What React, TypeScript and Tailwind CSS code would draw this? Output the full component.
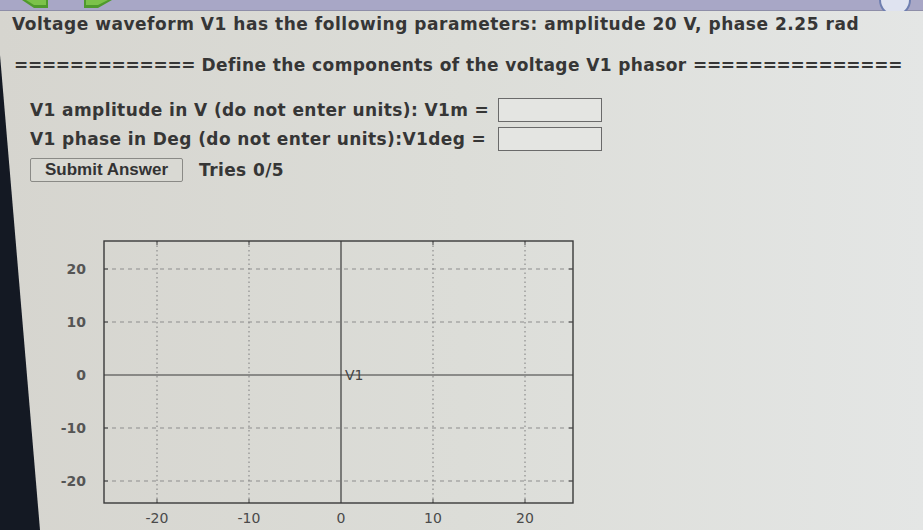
import React from "react";

const font = { fontFamily: '"DejaVu Sans", Verdana, sans-serif' };

function Chart() {
  const L = 64, R = 533, T = 9, B = 271;
  const x0 = 301, sx = 9.2, y0 = 143, sy = 5.3;
  const xs = [-20, -10, 10, 20];
  const ys = [20, 10, -10, -20];
  return (
    <svg width="560" height="300" viewBox="0 0 560 300" style={font}>
      {ys.map((v) => (
        <line key={"h" + v} x1={L} x2={R} y1={y0 - v * sy} y2={y0 - v * sy} stroke="#8d8d8d" strokeWidth="1" strokeDasharray="4 4" />
      ))}
      {xs.map((v) => (
        <line key={"v" + v} x1={x0 + v * sx} x2={x0 + v * sx} y1={T} y2={B} stroke="#8d8d8d" strokeWidth="1.2" strokeDasharray="1.5 3" />
      ))}
      {ys.map((v) => (
        <g key={"ty" + v}>
          <line x1={L} x2={L + 4} y1={y0 - v * sy} y2={y0 - v * sy} stroke="#444" />
          <line x1={R - 4} x2={R} y1={y0 - v * sy} y2={y0 - v * sy} stroke="#444" />
        </g>
      ))}
      {xs.map((v) => (
        <g key={"tx" + v}>
          <line x1={x0 + v * sx} x2={x0 + v * sx} y1={T} y2={T + 4} stroke="#444" />
          <line x1={x0 + v * sx} x2={x0 + v * sx} y1={B - 4} y2={B} stroke="#444" />
        </g>
      ))}
      <line x1={L} x2={R} y1={y0} y2={y0} stroke="#3a3a3a" strokeWidth="1.2" />
      <line x1={x0} x2={x0} y1={T} y2={B} stroke="#3a3a3a" strokeWidth="1.2" />
      <rect x={L} y={T} width={R - L} height={B - T} fill="none" stroke="#3a3a3a" strokeWidth="1.4" />
      <text x={x0 + 4} y={y0 + 5} fontSize="14" fill="#444">V1</text>
      {[20, 10, 0, -10, -20].map((v) => (
        <text key={"ly" + v} x={L - 18} y={y0 - v * sy + 5} fontSize="14" fontWeight="bold" fill="#555" textAnchor="end">{v}</text>
      ))}
      {[-20, -10, 0, 10, 20].map((v) => (
        <text key={"lx" + v} x={x0 + v * sx} y={291} fontSize="14" fill="#4a4a4a" textAnchor="middle">{v}</text>
      ))}
    </svg>
  );
}

export default function App() {
  return (
    <div className="relative w-[923px] h-[530px] overflow-hidden bg-linear-to-r from-[#d6d5cf] via-[#dcddd8] to-[#e4e6e5] text-[#363636]" style={font}>
      <div className="relative h-[11px] bg-[#a8a7c6] border-b border-[#8e8ea8]">
        <svg className="absolute left-[14px] top-0" width="110" height="11" viewBox="0 0 110 11">
          <path d="M8 0 L20 8 L34 8 L34 0 Z" fill="#4f9a2c" />
          <path d="M70 0 L70 8 L84 8 L98 0 Z" fill="#4f9a2c" />
          <path d="M12 0 L20 5 L32 5 L32 0 Z" fill="#7cc24a" />
          <path d="M72 0 L72 5 L84 5 L94 0 Z" fill="#7cc24a" />
        </svg>
        <svg className="absolute left-[878px] top-0" width="34" height="11" viewBox="0 0 34 11">
          <path d="M2 0 A15 15 0 0 0 32 0" fill="#dfe3f0" stroke="#6f7fb0" strokeWidth="2" />
        </svg>
      </div>

      <div className="pl-[12px] pt-[3px] font-bold tracking-[0.4px] text-[17px] leading-[20px]">
        <div className="whitespace-nowrap tracking-[0.53px]">
          Voltage waveform V1 has the following parameters: amplitude 20 V, phase 2.25 rad
        </div>
        <div className="mt-[21px] pl-[2px] whitespace-nowrap">
          <span className="tracking-[-0.3px]">=============</span> Define the components of the voltage V1 phasor <span className="tracking-[-0.3px]">===============</span>
        </div>

        <div className="mt-[23px] pl-[18px]">
          <div className="grid grid-cols-[auto_auto] justify-start items-center gap-x-[9px] gap-y-[5px]">
            <div className="whitespace-nowrap">V1 amplitude in V (do not enter units): V1m =</div>
            <input className="w-[104px] h-[24px] border border-[#6a6a6a] bg-[#e4e5e2]" />
            <div className="whitespace-nowrap">V1 phase in Deg (do not enter units):V1deg =</div>
            <input className="w-[104px] h-[24px] border border-[#6a6a6a] bg-[#e4e5e2]" />
          </div>
          <div className="mt-[7px] flex items-center gap-[16px]">
            <button className="w-[153px] h-[24px] rounded-[2px] border border-[#8a8a86] bg-[#d9d9d3] text-[17px] font-bold tracking-normal text-[#333]" style={{ fontFamily: '"Liberation Sans", Arial, sans-serif' }}>
              Submit Answer
            </button>
            <span>Tries 0/5</span>
          </div>
        </div>
      </div>

      <div className="mt-[50px] pl-[40px]">
        <Chart />
      </div>

      <div className="absolute left-0 top-0 w-[42px] h-[530px] bg-[#141923] [clip-path:polygon(0_55px,40px_530px,0_530px)]" />
    </div>
  );
}
